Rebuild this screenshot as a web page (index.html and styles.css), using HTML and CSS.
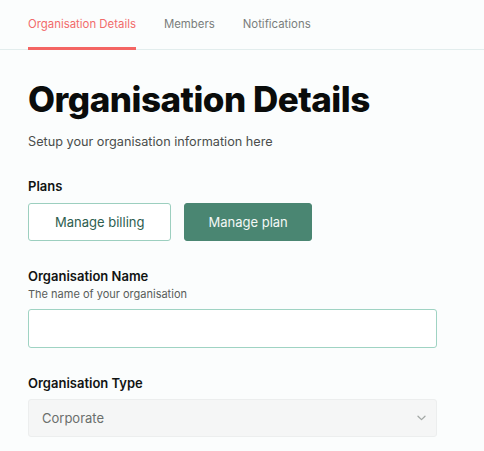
FILE: index.html
```html
<!DOCTYPE html>
<html lang="en">
<head>
<meta charset="utf-8">
<title>Organisation Details</title>
<link rel="stylesheet" href="styles.css">
</head>
<body>
<nav class="tabs">
  <a class="tab active">Organisation Details</a>
  <a class="tab">Members</a>
  <a class="tab">Notifications</a>
</nav>
<main class="content">
  <h1 class="title">Organisation Details</h1>
  <p class="subtitle">Setup your organisation information here</p>

  <section class="field">
    <div class="label">Plans</div>
    <div class="buttons">
      <button class="btn btn-outline">Manage billing</button>
      <button class="btn btn-primary">Manage plan</button>
    </div>
  </section>

  <section class="field">
    <div class="label">Organisation Name</div>
    <div class="hint">The name of your organisation</div>
    <div class="input"></div>
  </section>

  <section class="field">
    <div class="label">Organisation Type</div>
    <div class="select">
      <span class="select-value">Corporate</span>
      <svg class="chevron" width="9" height="6" viewBox="0 0 9 6"><path d="M1 1.2 L4.5 4.6 L8 1.2" fill="none" stroke="#a3a8a6" stroke-width="1.3" stroke-linecap="round" stroke-linejoin="round"/></svg>
    </div>
  </section>
</main>
</body>
</html>
```

FILE: styles.css
```css
* { box-sizing: border-box; }
body {
  margin: 0;
  background: #fbfdfd;
  font-family: Inter, "Noto Sans", sans-serif;
  color: #0b0e0d;
}
.tabs {
  display: flex;
  gap: 28px;
  padding-left: 28px;
  border-bottom: 1px solid #e2eded;
}
.tab {
  font-size: 11.4px;
  line-height: 14px;
  padding: 17px 0 16px;
  color: #7a7d7c;
  border-bottom: 3px solid transparent;
  margin-bottom: -1px;
}
.tab.active {
  color: #f26b6b;
  border-bottom-color: #f46563;
}
.content {
  padding: 0 28px;
}
.title {
  margin: 29px 0 0;
  font-size: 35px;
  line-height: 40px;
  font-weight: 800;
  letter-spacing: -0.5px;
  color: #0a0c0b;
}
.subtitle {
  margin: 13px 0 0;
  font-size: 12.7px;
  line-height: 20px;
  color: #4a4e4c;
}
.field { margin-top: 24px; }
.field + .field { margin-top: 25px; }
.label {
  font-size: 13px;
  line-height: 20px;
  font-weight: 600;
  color: #111413;
}
.hint {
  font-size: 11px;
  line-height: 16px;
  color: #585c5a;
}
.buttons {
  display: flex;
  gap: 13px;
  margin-top: 7px;
}
.btn {
  height: 38px;
  padding: 0 26px;
  font-family: inherit;
  font-size: 13px;
  border-radius: 3px;
  cursor: pointer;
}
.btn-outline {
  background: #ffffff;
  border: 1px solid #9ccfbf;
  color: #2e5e4f;
}
.btn-primary {
  padding: 0 23px;
  background: #4a8672;
  border: 1px solid #4a8672;
  color: #f3f8f6;
}
.input {
  margin-top: 7px;
  width: 409px;
  height: 39px;
  background: #ffffff;
  border: 1px solid #9fd3c3;
  border-radius: 3px;
}
.select {
  margin-top: 6px;
  width: 409px;
  height: 38px;
  display: flex;
  align-items: center;
  justify-content: space-between;
  padding: 0 10px 0 13px;
  background: #f5f6f6;
  border: 1px solid #eceeee;
  border-radius: 3px;
}
.select-value {
  font-size: 13px;
  color: #6a6e6c;
}
```
